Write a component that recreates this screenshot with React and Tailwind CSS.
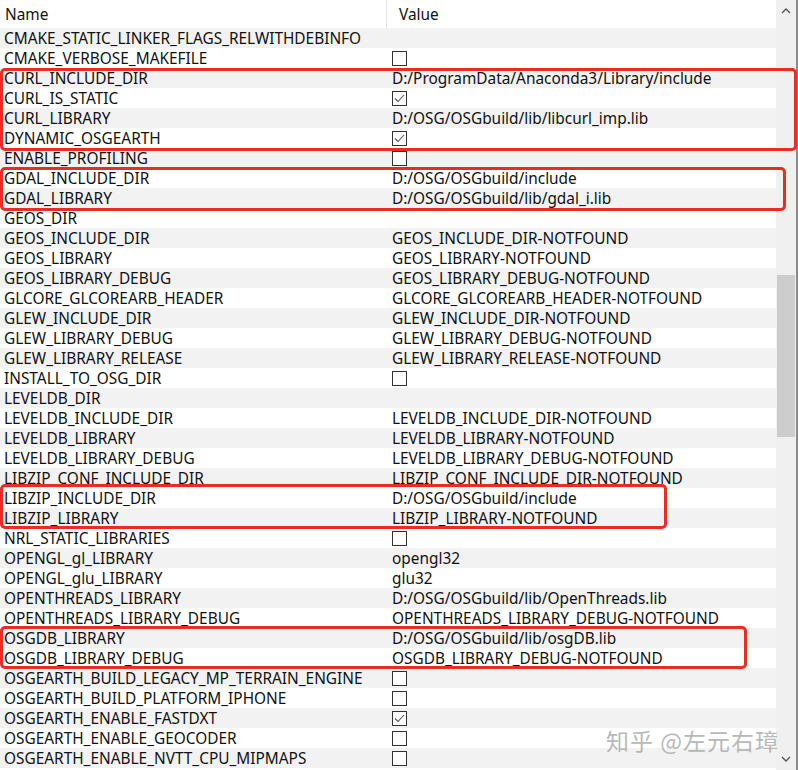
import React from "react";

const rows = [
  ["CMAKE_STATIC_LINKER_FLAGS_RELWITHDEBINFO", ""],
  ["CMAKE_VERBOSE_MAKEFILE", "off"],
  ["CURL_INCLUDE_DIR", "D:/ProgramData/Anaconda3/Library/include"],
  ["CURL_IS_STATIC", "on"],
  ["CURL_LIBRARY", "D:/OSG/OSGbuild/lib/libcurl_imp.lib"],
  ["DYNAMIC_OSGEARTH", "on"],
  ["ENABLE_PROFILING", "off"],
  ["GDAL_INCLUDE_DIR", "D:/OSG/OSGbuild/include"],
  ["GDAL_LIBRARY", "D:/OSG/OSGbuild/lib/gdal_i.lib"],
  ["GEOS_DIR", ""],
  ["GEOS_INCLUDE_DIR", "GEOS_INCLUDE_DIR-NOTFOUND"],
  ["GEOS_LIBRARY", "GEOS_LIBRARY-NOTFOUND"],
  ["GEOS_LIBRARY_DEBUG", "GEOS_LIBRARY_DEBUG-NOTFOUND"],
  ["GLCORE_GLCOREARB_HEADER", "GLCORE_GLCOREARB_HEADER-NOTFOUND"],
  ["GLEW_INCLUDE_DIR", "GLEW_INCLUDE_DIR-NOTFOUND"],
  ["GLEW_LIBRARY_DEBUG", "GLEW_LIBRARY_DEBUG-NOTFOUND"],
  ["GLEW_LIBRARY_RELEASE", "GLEW_LIBRARY_RELEASE-NOTFOUND"],
  ["INSTALL_TO_OSG_DIR", "off"],
  ["LEVELDB_DIR", ""],
  ["LEVELDB_INCLUDE_DIR", "LEVELDB_INCLUDE_DIR-NOTFOUND"],
  ["LEVELDB_LIBRARY", "LEVELDB_LIBRARY-NOTFOUND"],
  ["LEVELDB_LIBRARY_DEBUG", "LEVELDB_LIBRARY_DEBUG-NOTFOUND"],
  ["LIBZIP_CONF_INCLUDE_DIR", "LIBZIP_CONF_INCLUDE_DIR-NOTFOUND"],
  ["LIBZIP_INCLUDE_DIR", "D:/OSG/OSGbuild/include"],
  ["LIBZIP_LIBRARY", "LIBZIP_LIBRARY-NOTFOUND"],
  ["NRL_STATIC_LIBRARIES", "off"],
  ["OPENGL_gl_LIBRARY", "opengl32"],
  ["OPENGL_glu_LIBRARY", "glu32"],
  ["OPENTHREADS_LIBRARY", "D:/OSG/OSGbuild/lib/OpenThreads.lib"],
  ["OPENTHREADS_LIBRARY_DEBUG", "OPENTHREADS_LIBRARY_DEBUG-NOTFOUND"],
  ["OSGDB_LIBRARY", "D:/OSG/OSGbuild/lib/osgDB.lib"],
  ["OSGDB_LIBRARY_DEBUG", "OSGDB_LIBRARY_DEBUG-NOTFOUND"],
  ["OSGEARTH_BUILD_LEGACY_MP_TERRAIN_ENGINE", "off"],
  ["OSGEARTH_BUILD_PLATFORM_IPHONE", "off"],
  ["OSGEARTH_ENABLE_FASTDXT", "on"],
  ["OSGEARTH_ENABLE_GEOCODER", "off"],
  ["OSGEARTH_ENABLE_NVTT_CPU_MIPMAPS", "off"],
];

function Checkbox({ checked }) {
  return (
    <div className="w-[15px] h-[15px] border border-[#333333] bg-white flex items-center justify-center">
      {checked && (
        <svg width="11" height="9" viewBox="0 0 11 9">
          <path d="M1 4.5 L4 7.5 L10 1" fill="none" stroke="#555" strokeWidth="1.1" />
        </svg>
      )}
    </div>
  );
}

function Value({ v }) {
  if (v === "on" || v === "off") return <Checkbox checked={v === "on"} />;
  return <span className="pt-px">{v}</span>;
}

const boxes = [
  "left-0 top-[68px] w-[797px] h-[83px]",
  "left-0 top-[167px] w-[786px] h-[44px]",
  "left-0 top-[484px] w-[667px] h-[45px]",
  "left-0 top-[626px] w-[747px] h-[43px]",
];

export default function App() {
  return (
    <div
      className="relative w-[798px] h-[770px] bg-white overflow-hidden text-[15.4px] text-[#111] leading-[20px]"
      style={{ fontFamily: '"Noto Sans", "Microsoft YaHei", sans-serif' }}
    >
      <div className="flex h-full border-r-2 border-[#8a8a8a]">
        <div className="flex-1 flex flex-col">
          <div className="h-[28px] flex shrink-0 bg-white">
            <div className="w-[387px] pl-[5px] pt-[2px] flex items-center border-r border-[#e5e5e5]">Name</div>
            <div className="flex-1 pl-[12px] pt-[2px] flex items-center">Value</div>
          </div>
          {rows.map(([name, v], i) => (
            <div
              key={name}
              className={`h-[20px] flex shrink-0 items-center ${i % 2 === 0 ? "bg-[#f2f2f2]" : "bg-white"}`}
            >
              <div className="w-[387px] h-[20px] pl-[4px] pt-px whitespace-nowrap overflow-hidden">{name}</div>
              <div className="flex-1 h-[20px] pl-[5px] whitespace-nowrap overflow-hidden flex items-center">
                <Value v={v} />
              </div>
            </div>
          ))}
        </div>
        <div className="w-[20px] bg-[#f0f0f0] flex flex-col items-center shrink-0">
          <div className="h-[22px] flex items-center justify-center">
            <svg width="10" height="6" viewBox="0 0 10 6">
              <path d="M1 5 L5 1 L9 5" fill="none" stroke="#555" strokeWidth="1.4" />
            </svg>
          </div>
          <div className="flex-1 w-full flex flex-col">
            <div className="h-[253px]" />
            <div className="h-[162px] mx-[1px] bg-[#cdcdcd]" />
            <div className="flex-1" />
          </div>
          <div className="h-[22px] flex items-center justify-center">
            <svg width="10" height="6" viewBox="0 0 10 6">
              <path d="M1 1 L5 5 L9 1" fill="none" stroke="#555" strokeWidth="1.4" />
            </svg>
          </div>
        </div>
      </div>

      {boxes.map((c) => (
        <div key={c} className={`absolute ${c} border-[3px] border-[#ec2b24] rounded-[5px] pointer-events-none`} />
      ))}

      <div
        className="absolute left-[606px] top-[724px] text-[23px] leading-[32px] text-[#a8a8a8] opacity-80 tracking-[1px] whitespace-nowrap"
        style={{ fontFamily: '"Noto Sans CJK SC", sans-serif' }}
      >
        知乎 @左元右璋
      </div>
    </div>
  );
}
